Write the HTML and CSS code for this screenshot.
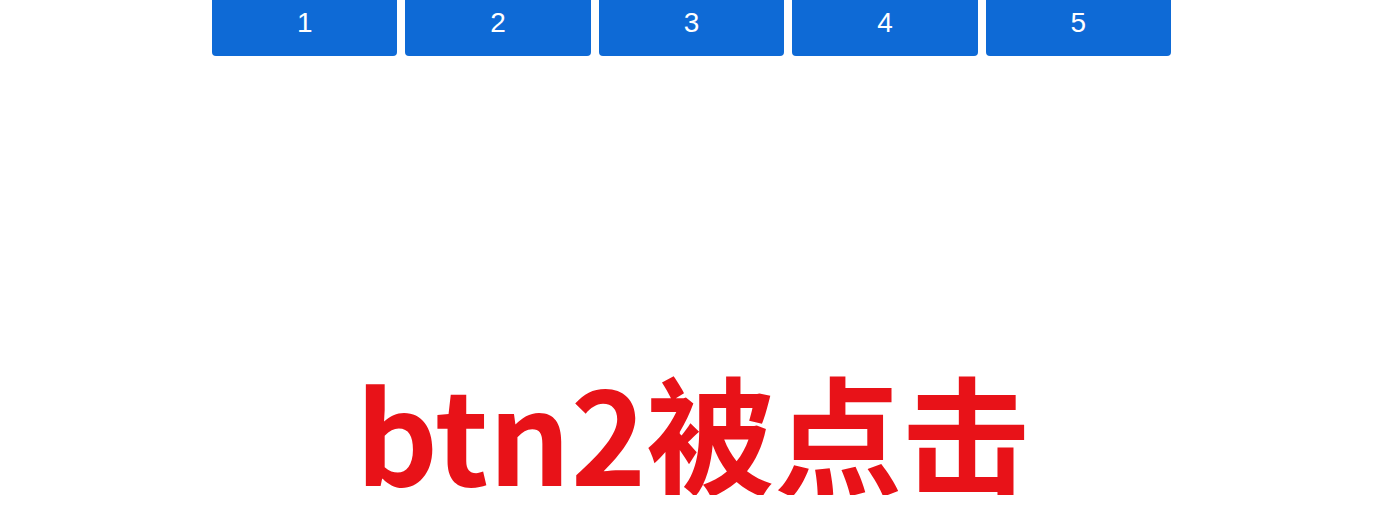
FILE: index.html
```html
<!DOCTYPE html>
<html lang="zh">
<head>
<meta charset="utf-8">
<link rel="stylesheet" href="styles.css">
</head>
<body>
<div class="bar">
  <button class="btn">1</button>
  <button class="btn">2</button>
  <button class="btn">3</button>
  <button class="btn">4</button>
  <button class="btn">5</button>
</div>
<div class="msg">btn2被点击</div>
</body>
</html>
```
FILE: styles.css
```css
html, body {
  margin: 0;
  padding: 0;
  background: #ffffff;
  overflow: hidden;
}
.bar {
  display: flex;
  gap: 8px;
  width: 959px;
  margin: -10px 0 0 212px;
}
.btn {
  flex: 1;
  height: 66px;
  border: none;
  border-radius: 4px;
  background: #0e6ad6;
  color: #ffffff;
  font-family: "Liberation Sans", Arial, sans-serif;
  font-size: 28px;
  padding: 0;
}
.msg {
  margin-top: 311px;
  text-align: center;
  padding-left: 8px;
  font-family: "Noto Sans CJK SC", "Noto Sans", sans-serif;
  font-weight: 700;
  font-size: 128px;
  line-height: 128px;
  color: #e81218;
}
```
